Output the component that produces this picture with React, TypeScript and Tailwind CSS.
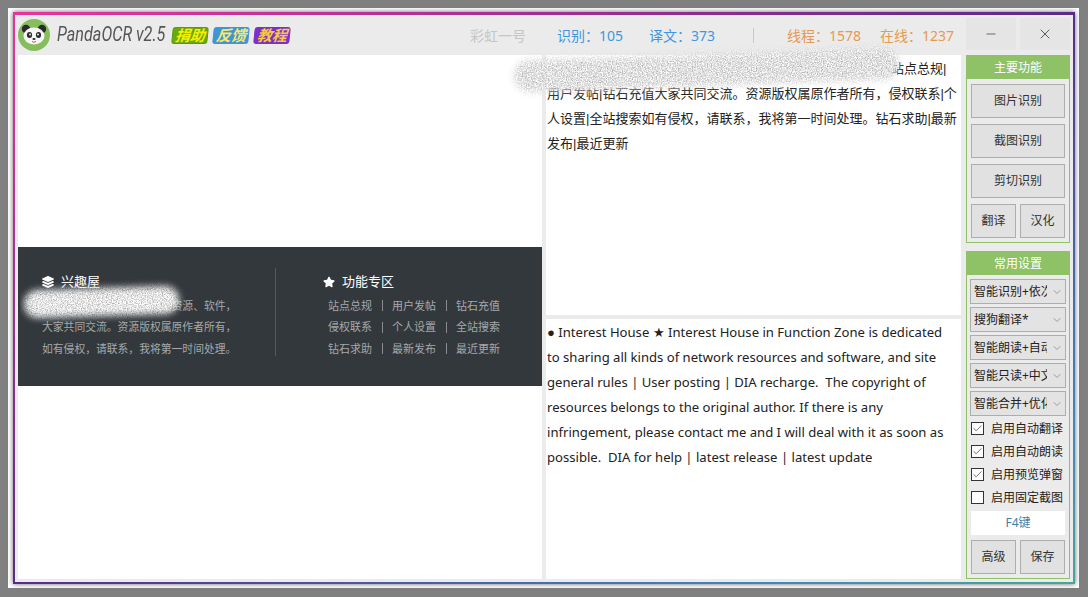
import { FaLayerGroup, FaStar } from "react-icons/fa";
import { ChevronDown, Check, Minus, X } from "lucide-react";

const cjk = "font-['Noto_Sans','Noto_Sans_CJK_SC',sans-serif]";

const PandaLogo = () => (
  <svg width="32" height="32" viewBox="0 0 32 32">
    <circle cx="16" cy="16" r="16" fill="#86bd5d" />
    <circle cx="8" cy="10" r="4.2" fill="#2b2b2b" />
    <circle cx="24" cy="10" r="4.2" fill="#2b2b2b" />
    <ellipse cx="16" cy="17" rx="10.5" ry="8.5" fill="#f6f6f6" />
    <ellipse cx="11.5" cy="16" rx="2.6" ry="3" fill="#2b2b2b" />
    <ellipse cx="20.5" cy="16" rx="2.6" ry="3" fill="#2b2b2b" />
    <circle cx="12" cy="15.5" r="0.9" fill="#fff" />
    <circle cx="20" cy="15.5" r="0.9" fill="#fff" />
    <ellipse cx="16" cy="20" rx="1.6" ry="1.1" fill="#2b2b2b" />
    <path d="M14 22.5q2 1.6 4 0" stroke="#c0605a" strokeWidth="1" fill="none" />
  </svg>
);

// scribble used in the screenshot to hide some of the text
const Smudge = ({ id, d, width, height, stroke, className, matrix }: { id: string; d: string; width: number; height: number; stroke: number; className: string; matrix: string }) => (
  <svg width={width} height={height} className={className}>
    <filter id={id} filterUnits="userSpaceOnUse" x="0" y="0" width={width} height={height} colorInterpolationFilters="sRGB">
      <feGaussianBlur in="SourceGraphic" stdDeviation="3.5" result="soft" />
      <feTurbulence type="fractalNoise" baseFrequency="0.8" numOctaves="2" seed="4" />
      <feColorMatrix type="matrix" values={matrix} />
      <feComposite in2="soft" operator="in" />
    </filter>
    <path d={d} stroke="#fff" strokeWidth={stroke} strokeLinecap="round" fill="none" filter={`url(#${id})`} />
  </svg>
);

const Badge = ({ text, bg, color, border }: { text: string; bg: string; color: string; border: string }) => (
  <span className={`flex h-[17px] w-[36px] -skew-x-6 items-center justify-center rounded-[3px] border text-[15px] font-bold italic leading-none ${bg} ${color} ${border}`}>
    {text}
  </span>
);

const Btn = ({ children, className }: { children: string; className: string }) => (
  <button className={`flex h-[34px] items-center justify-center border border-[#adadad] bg-[#e1e1e1] text-[12px] text-[#333] ${className}`}>
    {children}
  </button>
);

const Drop = ({ text }: { text: string }) => (
  <div className="flex h-[25px] w-[96px] items-center overflow-hidden border border-[#adadad] bg-[#e3e3e3] pl-[3px] text-[12px] text-[#222]">
    <span className="w-[73px] shrink-0 overflow-hidden whitespace-nowrap">{text}</span>
    <ChevronDown size={12} strokeWidth={1} className="ml-[4px] shrink-0 text-[#555]" />
  </div>
);

const Check2 = ({ text, on }: { text: string; on: boolean }) => (
  <div className="flex h-[23px] items-center pl-[4px] text-[12px] text-[#222]">
    <span className="flex h-[13px] w-[13px] items-center justify-center border border-[#333] bg-white">
      {on && <Check size={11} strokeWidth={1.5} className="text-[#333]" />}
    </span>
    <span className="ml-[7px] whitespace-nowrap">{text}</span>
  </div>
);

const Panel = ({ title, children, className }: { title: string; children: React.ReactNode; className: string }) => (
  <div className={`border border-[#8fc167] ${className}`}>
    <div className="flex h-[23px] items-center justify-center bg-[#8fc167] text-[12px] text-white">{title}</div>
    {children}
  </div>
);

const links = [
  ["站点总规", "用户发帖", "钻石充值"],
  ["侵权联系", "个人设置", "全站搜索"],
  ["钻石求助", "最新发布", "最近更新"],
];

export default function App() {
  return (
    <div className={`h-[597px] w-[1088px] overflow-hidden bg-[#808080] pl-2 pt-2 ${cjk}`}>
      <div className="h-[580px] w-[1071px] bg-white pl-[5px] pt-[4px]">
        <div className="h-[572px] w-[1062px] bg-[linear-gradient(to_bottom_right,#e8349c,#5a2b88_50%,#3d86c0_85%,#4aa59a)] pb-[2px] pl-[2px] pr-[2px] pt-[3px] shadow-[0_0_5px_#666]">
          <div className="relative h-full w-full bg-[#ebebeb]">
            {/* title bar */}
            <div className="flex h-10 items-center pl-[3px] text-[14px]">
              <PandaLogo />
              <span className="ml-[7px] w-[109px] origin-left scale-x-[0.77] whitespace-nowrap font-['Roboto',sans-serif] text-[21px] italic text-[#555]">PandaOCR v2.5</span>
              <div className="ml-[6px] flex gap-[5px]">
                <Badge text="捐助" bg="bg-[#6aa80e]" color="text-[#f4f000]" border="border-[#5a9a10]" />
                <Badge text="反馈" bg="bg-[#3f95d6]" color="text-[#f6e96a]" border="border-[#3f95d6]" />
                <Badge text="教程" bg="bg-[#7d2fc9]" color="text-[#f7c93e]" border="border-[#7d2fc9]" />
              </div>
              <span className="ml-[180px] w-[56px] whitespace-nowrap text-[#c6c6c6]">彩虹一号</span>
              <span className="ml-[31px] w-[66px] whitespace-nowrap text-[#3f97dd]">识别：105</span>
              <span className="ml-[26px] w-[66px] whitespace-nowrap text-[#3f97dd]">译文：373</span>
              <span className="ml-[38px] h-[15px] w-px bg-[#c8c8c8]" />
              <span className="ml-[33px] w-[75px] whitespace-nowrap text-[#e59a4f]">线程：1578</span>
              <span className="ml-[18px] w-[75px] whitespace-nowrap text-[#e59a4f]">在线：1237</span>
              <div className="ml-[11px] flex gap-[4px] pb-[2px]">
                <div className="flex h-[32px] w-[50px] items-center justify-center bg-[#e5e5e5]">
                  <Minus size={14} strokeWidth={1} className="text-[#111]" />
                </div>
                <div className="flex h-[32px] w-[50px] items-center justify-center bg-[#e5e5e5]">
                  <X size={16} strokeWidth={1} className="text-[#111]" />
                </div>
              </div>
            </div>

            {/* body */}
            <div className="flex h-[524px] pl-[3px]">
              <div className="flex w-[524px] flex-col justify-center bg-white pb-[1px]">
                <div className="flex h-[139px] bg-[#33383d] pt-[21px]">
                  <div className="h-[88px] w-[258px] border-r border-[#555a5e] pl-[24px] text-[10.8px] text-[#a5a8aa]">
                    <div className="flex h-[27px] items-center text-[13px] text-white">
                      <FaLayerGroup size={12} />
                      <span className="ml-[7px]">兴趣屋</span>
                    </div>
                    <div className="flex h-[21.5px] items-center whitespace-nowrap">兴趣屋致力于分享各类网络资源、软件，</div>
                    <div className="flex h-[21.5px] items-center whitespace-nowrap">大家共同交流。资源版权属原作者所有，</div>
                    <div className="flex h-[21.5px] items-center whitespace-nowrap">如有侵权，请联系，我将第一时间处理。</div>
                  </div>
                  <div className="pl-[47px] text-[11px] text-[#a5a8aa]">
                    <div className="flex h-[27px] items-center text-[13px] text-white">
                      <FaStar size={12} />
                      <span className="ml-[7px]">功能专区</span>
                    </div>
                    {links.map((row) => (
                      <div key={row[0]} className="flex h-[21.5px] items-center pl-[5px]">
                        {row.map((t, i) => (
                          <span key={t} className="flex items-center whitespace-nowrap">
                            {i > 0 && <span className="mx-[9.5px] h-[11px] w-px bg-[#8a8d90]" />}
                            {t}
                          </span>
                        ))}
                      </div>
                    ))}
                  </div>
                </div>
              </div>

              <div className="ml-[4px] flex w-[415px] flex-col gap-[4px] leading-[25px] text-[#222]">
                <div className="h-[260px] whitespace-nowrap bg-white pl-px pt-[1px] text-[13px] font-['Liberation_Sans','Noto_Sans_CJK_SC',sans-serif]">
                  <div className="pl-[58px]">兴趣屋功能专区致力于分享各类网络资源、软件，站点总规|</div>
                  <div>用户发帖|钻石充值大家共同交流。资源版权属原作者所有，侵权联系|个</div>
                  <div>人设置|全站搜索如有侵权，请联系，我将第一时间处理。钻石求助|最新</div>
                  <div>发布|最近更新</div>
                </div>
                <div className="h-[260px] whitespace-pre bg-white pl-px pt-px font-['Noto_Sans',sans-serif] text-[13.1px]">
                  <div>● Interest House ★ Interest House in Function Zone is dedicated</div>
                  <div>to sharing all kinds of network resources and software, and site</div>
                  <div>general rules | User posting | DIA recharge.  The copyright of</div>
                  <div>resources belongs to the original author. If there is any</div>
                  <div>infringement, please contact me and I will deal with it as soon as</div>
                  <div>possible.  DIA for help | latest release | latest update</div>
                </div>
              </div>

              <div className="ml-[5px] w-[104px]">
                <Panel title="主要功能" className="h-[188px] bg-[#ebebeb]">
                  <div className="flex flex-wrap gap-x-[4px] gap-y-[6px] px-[4px] pt-[5px]">
                    <Btn className="w-[94px]">图片识别</Btn>
                    <Btn className="w-[94px]">截图识别</Btn>
                    <Btn className="w-[94px]">剪切识别</Btn>
                    <Btn className="w-[45px]">翻译</Btn>
                    <Btn className="w-[45px]">汉化</Btn>
                  </div>
                </Panel>
                <Panel title="常用设置" className="mt-[8px] h-[328px] bg-[#ebebeb]">
                  <div className="flex flex-col gap-[3px] pl-[3px] pt-[4px]">
                    <Drop text="智能识别+依次" />
                    <Drop text="搜狗翻译*" />
                    <Drop text="智能朗读+自动" />
                    <Drop text="智能只读+中文" />
                    <Drop text="智能合并+优化" />
                  </div>
                  <div className="pt-[1px]">
                    <Check2 on text="启用自动翻译" />
                    <Check2 on text="启用自动朗读" />
                    <Check2 on text="启用预览弹窗" />
                    <Check2 on={false} text="启用固定截图" />
                  </div>
                  <div className="mx-[4px] mt-[2px] flex h-[24px] items-center justify-center bg-white text-[12px] text-[#3f7fa8]">F4键</div>
                  <div className="mt-[5px] flex gap-[4px] px-[4px]">
                    <Btn className="w-[45px]">高级</Btn>
                    <Btn className="w-[45px]">保存</Btn>
                  </div>
                </Panel>
              </div>
            </div>

            {/* scribbles over the hidden text */}
            <Smudge id="s1" matrix="0.7 0 0 0 0.55 0.7 0 0 0 0.55 0.7 0 0 0 0.55 0 0 0 0 1" d="M18 27 L145 23" width={175} height={60} stroke={28} className="absolute left-[5px] top-[262px]" />
            <Smudge id="s2" matrix="0.6 0 0 0 0.58 0.6 0 0 0 0.58 0.6 0 0 0 0.58 0 0 0 0 1" d="M25 46 C140 42 280 38 378 34" width={410} height={70} stroke={32} className="absolute left-[490px] top-[15px]" />
          </div>
        </div>
      </div>
    </div>
  );
}
